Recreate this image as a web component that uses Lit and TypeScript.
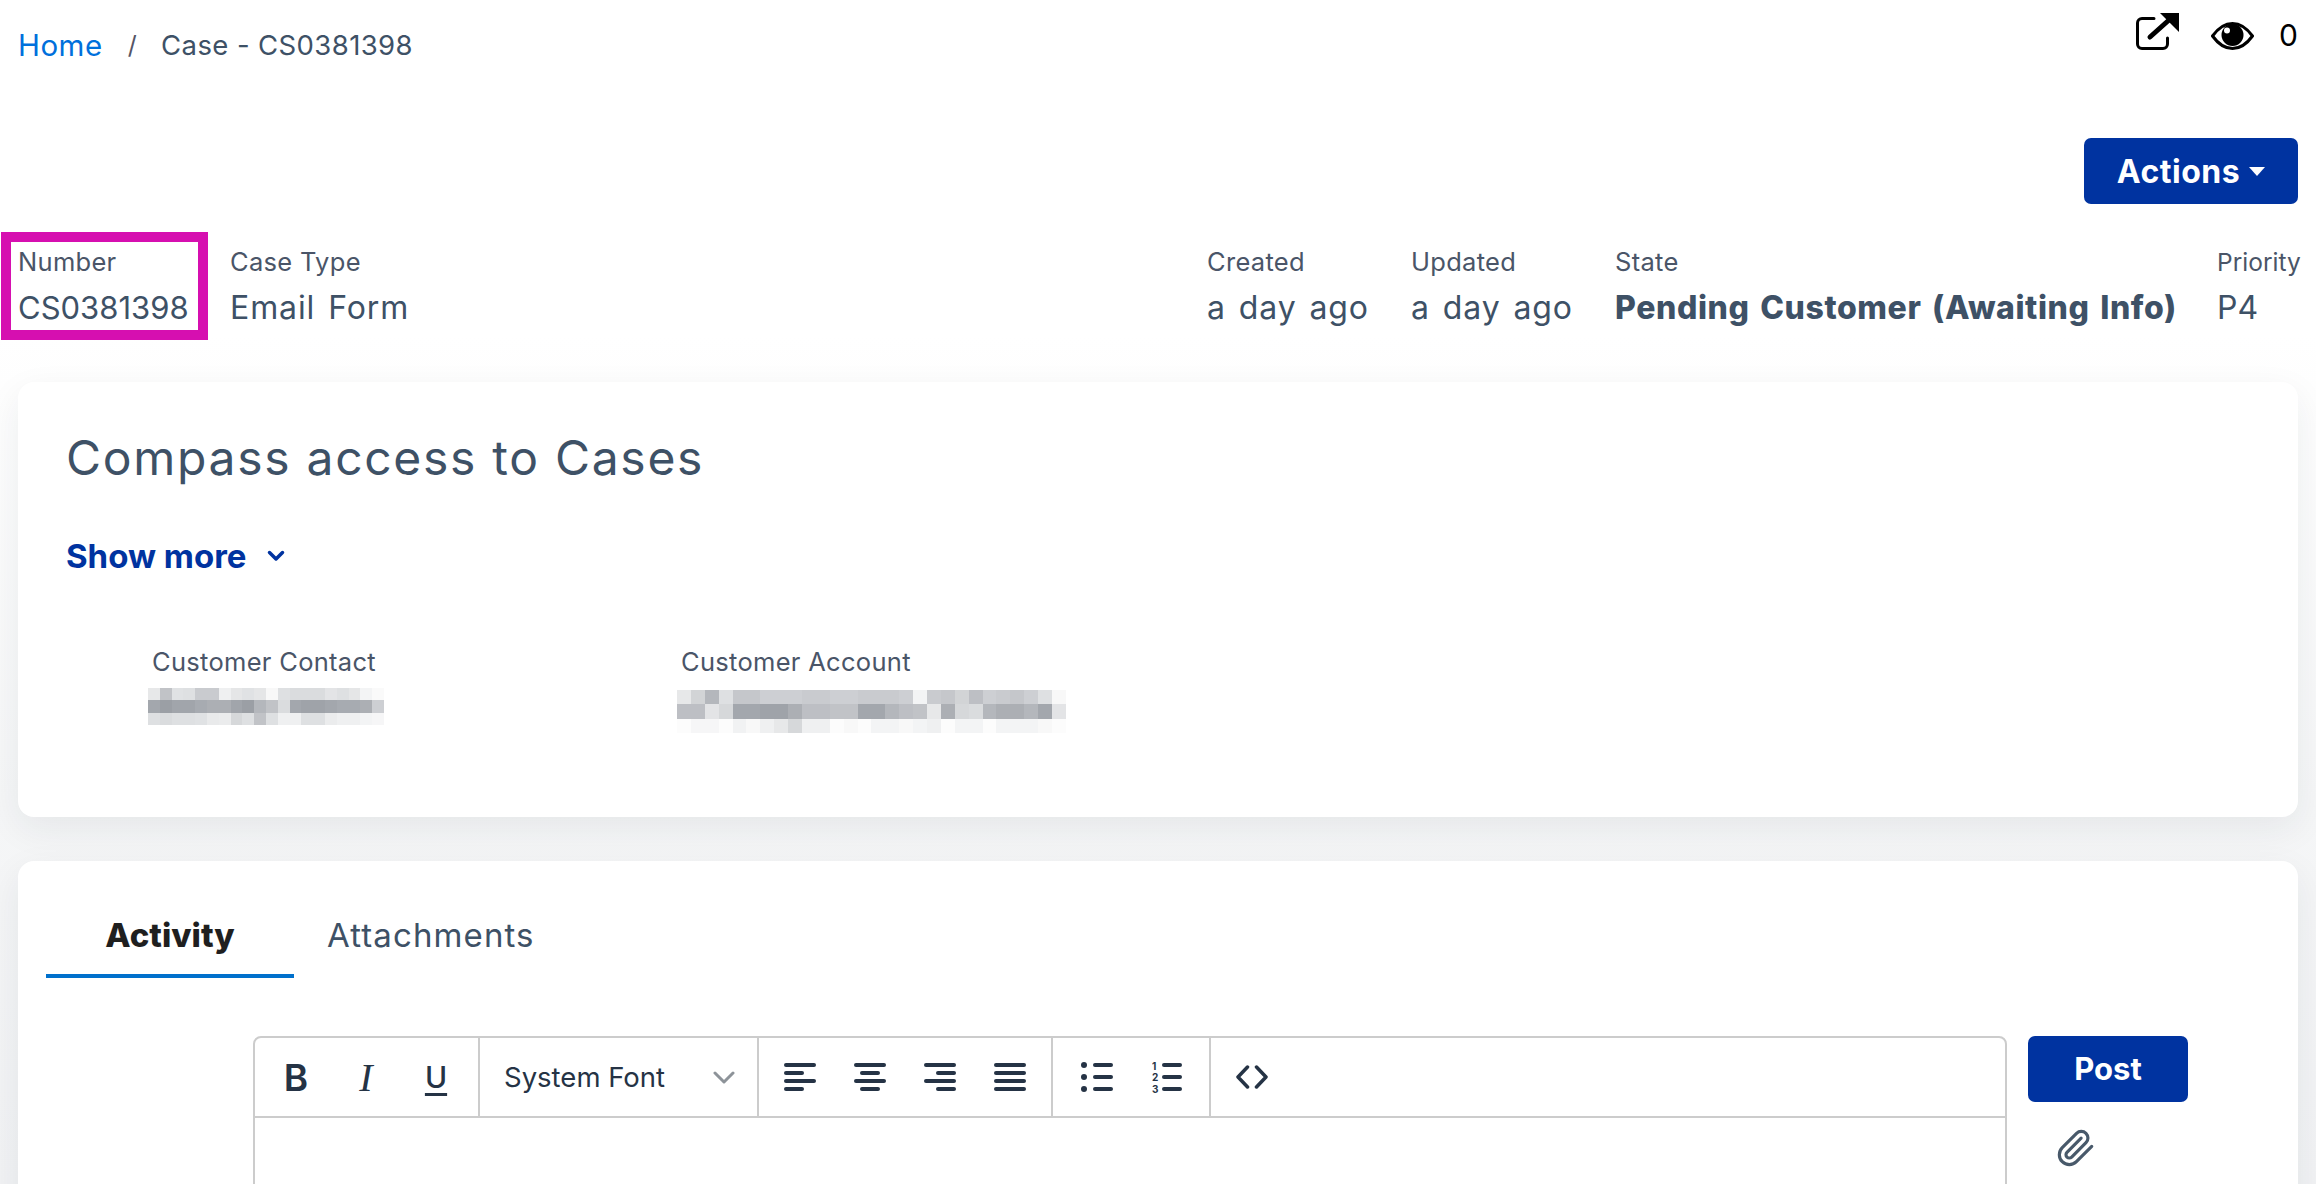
import { LitElement, html, css, svg } from "lit";
import { customElement } from "lit/decorators.js";

const contact = [
  "e8 c4 e2 e0 cc cc f0 e6 e2 e6 f8 e0 dc dc dc e4 e0 e6 f4 fa",
  "a8 a0 a6 a6 ac b0 b0 a6 a0 b8 c4 dc a8 a4 a4 a8 ac ac b0 d0",
  "e0 dc e0 e0 e2 ea ec d8 e0 c4 e0 f0 f0 e0 e0 ec f0 f0 f4 f6",
];
const account = [
  "e8 d4 b8 e0 c8 c8 d0 d0 d0 cc cc d0 d0 cc cc cc d0 f4 cc c8 d4 c0 d0 cc c8 d0 e0 f8",
  "c0 c0 e4 d8 a8 a8 a4 a4 b0 c0 c0 c4 c4 a8 a8 b8 c0 c4 e8 b0 d8 dc b8 b0 b0 b8 a8 e4",
  "fc f6 f6 fc f2 f8 f0 e8 d8 f0 f0 fc f8 fc f4 f4 f8 f4 f0 fc f4 f4 fc f4 f4 f4 f8 fc",
];

const tint = (hex: string) => {
  const v = parseInt(hex, 16);
  const k = (255 - v) / 90;
  return `rgb(${Math.round(v - 5 * k)},${Math.round(v - 1 * k)},${Math.min(255, Math.round(v + 5 * k))})`;
};

const lines = (rows: [number, number][]) =>
  html`<svg class="ico" width="32" height="28" viewBox="0 0 32 28">
    ${rows.map(
      ([x, w], i) => svg`<rect x=${x} y=${i * 8} width=${w} height="4" rx="2" fill="#253345"></rect>`
    )}
  </svg>`;

@customElement("app-root")
export class AppRoot extends LitElement {
  static styles = css`
    :host {
      display: block;
      height: 1184px;
      overflow: hidden;
      font-family: "Inter", "Liberation Sans", sans-serif;
      color: #3e5166;
      background: linear-gradient(180deg, #fff 0, #fff 335px, #f5f6f7 800px, #f1f2f4 1184px);
    }
    .top {
      display: flex;
      justify-content: space-between;
      height: 138px;
      padding: 0 18px;
      box-sizing: border-box;
    }
    .crumbs {
      display: flex;
      align-items: center;
      height: 90px;
      font-size: 27.5px;
      letter-spacing: 0.4px;
    }
    .crumbs a { color: #0070dc; font-size: 29.5px; letter-spacing: 0.5px; }
    .crumbs .sep { margin: 0 24px 0 25px; color: #556; font-size: 25px; }
    .tools { display: flex; align-items: flex-start; color: #000; font-size: 30px; }
    .ext { margin-top: 13px; }
    .eye { margin: 22px 0 0 32px; }
    .count { margin: 17px 0 0 25px; line-height: 36px; }
    .actions-row { display: flex; justify-content: flex-end; padding-right: 18px; }
    .actions {
      display: flex;
      align-items: center;
      justify-content: center;
      gap: 9px;
      width: 214px;
      height: 66px;
      border: none;
      border-radius: 7px;
      background: #0033a0;
      color: #fff;
      font: 700 32px "Inter", sans-serif;
      letter-spacing: 0.5px;
    }
    .caret {
      width: 0;
      height: 0;
      border-left: 8px solid transparent;
      border-right: 8px solid transparent;
      border-top: 9px solid #fff;
    }
    .meta {
      display: grid;
      grid-template-columns: 171px 1fr 163px 163px 561px 81px;
      column-gap: 41px;
      padding: 0 18px;
      margin-top: 40px;
      height: 138px;
    }
    .cell { position: relative; }
    .label {
      font-size: 25.5px;
      line-height: 36px;
      letter-spacing: 0.3px;
      color: #4a5568;
      white-space: nowrap;
    }
    .label.tight { font-size: 24.5px; letter-spacing: 0; }
    .value {
      font-size: 32px;
      line-height: 44px;
      margin-top: 6px;
      letter-spacing: 0.9px;
      word-spacing: 3px;
      white-space: nowrap;
    }
    .value.num { font-size: 31px; letter-spacing: 0; }
    .value.short { letter-spacing: 0; }
    .value.strong { font-weight: 800; letter-spacing: 0.6px; }
    .mark {
      position: absolute;
      left: -17px;
      top: -12px;
      width: 207px;
      height: 108px;
      box-sizing: border-box;
      border: 10px solid #d60fb0;
    }
    .card {
      background: #fff;
      border-radius: 16px;
      margin: 0 18px;
      box-shadow: 0 12px 36px rgba(30, 40, 60, 0.07);
    }
    .summary { height: 435px; padding: 46px 48px 0; box-sizing: border-box; }
    h1 { margin: 0; font-size: 48px; line-height: 60px; font-weight: 400; letter-spacing: 1.7px; }
    .more {
      display: flex;
      align-items: center;
      gap: 21px;
      margin-top: 45px;
      height: 46px;
      color: #0033a0;
      font-size: 33px;
      font-weight: 700;
    }
    .people {
      display: grid;
      grid-template-columns: 529px 1fr;
      margin-top: 65px;
      padding-left: 86px;
    }
    .pixels { margin-top: 8px; margin-left: -4px; }
    .pixels .row { display: flex; }
    .pixels.a .px { width: 11.8px; height: 12.4px; }
    .pixels.b { margin-top: 10px; }
    .pixels.b .px { width: 13.9px; height: 14.4px; }
    .work { margin-top: 44px; height: 500px; position: relative; }
    .tabs { display: flex; padding: 46px 0 0 28px; font-size: 33px; }
    .tab { height: 71px; line-height: 56px; box-sizing: border-box; }
    .tab.on {
      width: 248px;
      text-align: center;
      border-bottom: 4px solid #0070cc;
      color: #1f1f1f;
      font-weight: 800;
    }
    .tab.off { margin-left: 33px; letter-spacing: 1.1px; }
    .compose {
      display: flex;
      gap: 21px;
      margin: 58px 0 0 235px;
    }
    .editor {
      width: 1754px;
      height: 400px;
      box-sizing: border-box;
      border: 2px solid #ccc;
      border-radius: 8px 8px 0 0;
    }
    .bar { display: flex; height: 78px; border-bottom: 2px solid #ccc; box-sizing: content-box; }
    .group {
      display: flex;
      align-items: center;
      padding: 0 6px;
      border-right: 2px solid #ccc;
    }
    .group.wide { padding-right: 7px; }
    .group.list { padding: 0 7px 0 9px; }
    .group.last { border-right: none; }
    .btn {
      display: flex;
      align-items: center;
      justify-content: center;
      width: 70px;
      height: 100%;
      color: #253345;
    }
    .b { font-size: 37px; font-weight: 600; }
    .i { font: italic 40px "Liberation Serif", serif; }
    .u { font-size: 30px; font-weight: 500; text-decoration: underline; text-decoration-thickness: 3px; text-underline-offset: 5px; }
    .font {
      display: flex;
      align-items: center;
      justify-content: space-between;
      width: 279px;
      padding: 0 22px 0 24px;
      box-sizing: border-box;
      border-right: 2px solid #ccc;
      font-size: 27.5px;
      color: #253345;
    }
    .side { display: flex; flex-direction: column; align-items: center; width: 160px; }
    .post {
      width: 160px;
      height: 66px;
      border: none;
      border-radius: 7px;
      background: #0033a0;
      color: #fff;
      font: 700 31px "Inter", sans-serif;
      padding: 0 0 2px;
    }
    .clip { margin: 26px 0 0 -64px; }
  `;

  private pixels(rows: string[], cls: string) {
    return html`<div class="pixels ${cls}">
      ${rows.map(
        (r) => html`<div class="row">
          ${r.split(" ").map((c) => html`<div class="px" style="background:${tint(c)}"></div>`)}
        </div>`
      )}
    </div>`;
  }

  render() {
    return html`
      <div class="top">
        <div class="crumbs"><a>Home</a><span class="sep">/</span><span>Case - CS0381398</span></div>
        <div class="tools">
          <svg class="ext" width="43" height="37" viewBox="0 0 43 37" fill="none">
            <path d="M18 5.500H6a4.500 4.500 0 0 0-4.500 4.500v21A4.500 4.500 0 0 0 6 35.500h21a4.500 4.500 0 0 0 4.500-4.500V25" stroke="#000" stroke-width="3" stroke-linecap="round"></path>
            <path d="M14 24 33 7" stroke="#000" stroke-width="5" stroke-linecap="round"></path>
            <path d="M24 0h19v19z" fill="#000"></path>
          </svg>
          <svg class="eye" width="43" height="28" viewBox="0 0 43 28" fill="none">
            <path d="M1.500 14C8 5 14.500 1.500 21.500 1.500S35 5 41.500 14C35 23 28.500 26.500 21.500 26.500S8 23 1.500 14Z" stroke="#000" stroke-width="3"></path>
            <circle cx="21.500" cy="13" r="11" fill="#000"></circle>
            <circle cx="16" cy="8.500" r="3" fill="#fff"></circle>
          </svg>
          <span class="count">0</span>
        </div>
      </div>
      <div class="actions-row">
        <button class="actions">Actions<span class="caret"></span></button>
      </div>
      <div class="meta">
        <div class="cell">
          <div class="mark"></div>
          <div class="label">Number</div>
          <div class="value num">CS0381398</div>
        </div>
        <div class="cell"><div class="label">Case Type</div><div class="value">Email Form</div></div>
        <div class="cell"><div class="label">Created</div><div class="value">a day ago</div></div>
        <div class="cell"><div class="label">Updated</div><div class="value">a day ago</div></div>
        <div class="cell"><div class="label">State</div><div class="value strong">Pending Customer (Awaiting Info)</div></div>
        <div class="cell"><div class="label tight">Priority</div><div class="value short">P4</div></div>
      </div>
      <section class="card summary">
        <h1>Compass access to Cases</h1>
        <div class="more">
          Show more
          <svg width="18" height="12" viewBox="0 0 18 12" fill="none">
            <path d="M2.500 2.500 9 9l6.500-6.500" stroke="#0033a0" stroke-width="3.500" stroke-linecap="round" stroke-linejoin="round"></path>
          </svg>
        </div>
        <div class="people">
          <div>
            <div class="label">Customer Contact</div>
            ${this.pixels(contact, "a")}
          </div>
          <div>
            <div class="label">Customer Account</div>
            ${this.pixels(account, "b")}
          </div>
        </div>
      </section>
      <section class="card work">
        <div class="tabs">
          <div class="tab on">Activity</div>
          <div class="tab off">Attachments</div>
        </div>
        <div class="compose">
          <div class="editor">
            <div class="bar">
              <div class="group wide">
                <div class="btn b">B</div>
                <div class="btn i">I</div>
                <div class="btn u">U</div>
              </div>
              <div class="font">
                System Font
                <svg width="22" height="13" viewBox="0 0 22 13" fill="none">
                  <path d="M2 2l9 9 9-9" stroke="#8d9399" stroke-width="3" stroke-linecap="round" stroke-linejoin="round"></path>
                </svg>
              </div>
              <div class="group">
                <div class="btn">${lines([[0, 32], [0, 20], [0, 32], [0, 20]])}</div>
                <div class="btn">${lines([[0, 32], [6, 20], [0, 32], [6, 20]])}</div>
                <div class="btn">${lines([[0, 32], [12, 20], [0, 32], [12, 20]])}</div>
                <div class="btn">${lines([[0, 32], [0, 32], [0, 32], [0, 32]])}</div>
              </div>
              <div class="group list">
                <div class="btn">
                  <svg width="32" height="30" viewBox="0 0 32 30" fill="#253345">
                    <circle cx="3" cy="3" r="3"></circle><circle cx="3" cy="15" r="3"></circle><circle cx="3" cy="27" r="3"></circle>
                    <rect x="12" y="1" width="20" height="4" rx="2"></rect><rect x="12" y="13" width="20" height="4" rx="2"></rect><rect x="12" y="25" width="20" height="4" rx="2"></rect>
                  </svg>
                </div>
                <div class="btn">
                  <svg width="30" height="44" viewBox="0 -6 30 44" fill="#253345">
                    <text x="0" y="8.500" font-size="10" font-weight="700" font-family="Inter">1</text>
                    <text x="0" y="20" font-size="10" font-weight="700" font-family="Inter">2</text>
                    <text x="0" y="31.500" font-size="10" font-weight="700" font-family="Inter">3</text>
                    <rect x="10" y="2" width="20" height="4" rx="2"></rect><rect x="10" y="14" width="20" height="4" rx="2"></rect><rect x="10" y="26" width="20" height="4" rx="2"></rect>
                  </svg>
                </div>
              </div>
              <div class="group last">
                <div class="btn">
                  <svg width="32" height="24" viewBox="0 0 32 24" fill="none">
                    <path d="M11.500 2 2 12l9.500 10M20.500 2 30 12l-9.500 10" stroke="#253345" stroke-width="3.500" stroke-linecap="round" stroke-linejoin="round"></path>
                  </svg>
                </div>
              </div>
            </div>
          </div>
          <div class="side">
            <button class="post">Post</button>
            <svg class="clip" width="40" height="40" viewBox="0 0 24 24" fill="none">
              <path d="m21.440 11.050-9.190 9.190a6 6 0 0 1-8.490-8.490l8.570-8.570A4 4 0 1 1 18 8.840l-8.590 8.570a2 2 0 0 1-2.830-2.830l8.490-8.480" stroke="#48596a" stroke-width="1.900" stroke-linecap="round" stroke-linejoin="round"></path>
            </svg>
          </div>
        </div>
      </section>
    `;
  }
}
